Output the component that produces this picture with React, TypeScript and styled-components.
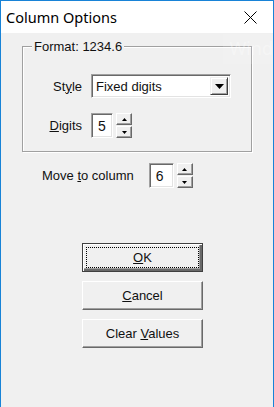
import React from 'react';
import styled, { createGlobalStyle } from 'styled-components';

const GlobalStyle = createGlobalStyle`
	html, body {
		margin: 0;
		padding: 0;
		background: #f0f0f0;
	}
	body {
		width: 274px;
		height: 407px;
		overflow: hidden;
	}
`;

const Window = styled.div`
	position: relative;
	box-sizing: border-box;
	width: 274px;
	height: 407px;
	border: 1px solid #1883d7;
	border-bottom: none;
	background: #f0f0f0;
	display: flex;
	flex-direction: column;
	font-family: 'Liberation Sans', Arial, sans-serif;
	font-size: 13px;
	color: #111;
	overflow: hidden;
`;

const TitleBar = styled.div`
	height: 32px;
	flex-shrink: 0;
	background: #fff;
	display: flex;
	align-items: center;
	justify-content: space-between;
	padding-left: 5px;
`;

const Title = styled.span`
	font-family: 'Noto Sans', sans-serif;
	font-size: 14.5px;
	color: #000;
`;

const CloseButton = styled.div`
	width: 46px;
	height: 32px;
	display: flex;
	align-items: center;
	justify-content: center;
`;

const Watermark = styled.div`
	position: absolute;
	top: 33px;
	right: -4px;
	padding: 2px 4px 4px 6px;
	background: rgba(255, 255, 255, 0.12);
	color: rgba(255, 255, 255, 0.35);
	font-family: 'Noto Sans', sans-serif;
	font-size: 18px;
	z-index: 1;
`;

const Body = styled.div`
	flex: 1;
	display: flex;
	flex-direction: column;
	padding: 6px 0 0 21px;
`;

const GroupBox = styled.fieldset`
	box-sizing: border-box;
	width: 230px;
	margin: 0;
	padding: 20px 0 13px 0;
	border: 1px solid #a0a0a0;
	box-shadow: 1px 1px 0 #fff, inset 1px 1px 0 #fff;
	display: grid;
	grid-template-columns: 59px auto;
	column-gap: 9px;
	row-gap: 15px;
	align-items: center;
`;

const Legend = styled.legend`
	margin-left: 9px;
	padding: 0 2px;
	background: #f0f0f0;
`;

const Label = styled.span`
	justify-self: end;
	white-space: nowrap;
`;

const Key = styled.span`
	text-decoration: underline;
`;

const Combo = styled.div`
	box-sizing: border-box;
	width: 140px;
	height: 24px;
	background: #fff;
	border: 1px solid;
	border-color: #a0a0a0 #fff #fff #a0a0a0;
	box-shadow: inset 1px 1px 0 #696969, inset -1px -1px 0 #e3e3e3;
	display: flex;
	align-items: stretch;
	padding: 2px;
`;

const ComboText = styled.span`
	flex: 1;
	display: flex;
	align-items: center;
	padding-left: 2px;
`;

const DropButton = styled.div`
	box-sizing: border-box;
	width: 18px;
	background: #f0f0f0;
	border: 1px solid;
	border-color: #f0f0f0 #404040 #404040 #f0f0f0;
	box-shadow: inset 1px 1px 0 #fff, inset -1px -1px 0 #a0a0a0;
	display: flex;
	align-items: center;
	justify-content: center;
`;

const SpinRow = styled.div`
	display: flex;
	align-items: center;
	gap: 3px;
`;

const Edit = styled.div<{ $width: number }>`
	box-sizing: border-box;
	width: ${(p) => p.$width}px;
	height: 25px;
	background: #fff;
	border: 1px solid;
	border-color: #a0a0a0 #fff #fff #a0a0a0;
	box-shadow: inset 1px 1px 0 #696969, inset -1px -1px 0 #e3e3e3;
	display: flex;
	align-items: center;
	padding-left: 6px;
	font-size: 14px;
`;

const Spinner = styled.div`
	display: flex;
	flex-direction: column;
	gap: 1px;
`;

const SpinButton = styled.div`
	box-sizing: border-box;
	width: 16px;
	height: 12px;
	background: #f0f0f0;
	border: 1px solid;
	border-color: #fff #696969 #696969 #fff;
	box-shadow: inset -1px -1px 0 #a0a0a0;
	display: flex;
	align-items: center;
	justify-content: center;
`;

const MoveRow = styled.div`
	display: flex;
	align-items: center;
	margin: 11px 0 0 20px;
	gap: 15px;
`;

const Buttons = styled.div`
	display: flex;
	flex-direction: column;
	gap: 9px;
	margin: 55px 0 0 60px;
`;

const Button = styled.div<{ $default?: boolean }>`
	box-sizing: border-box;
	width: 121px;
	height: 29px;
	background: #f0f0f0;
	border: 1px solid;
	border-color: ${(p) => (p.$default ? '#404040' : '#fff #696969 #696969 #fff')};
	box-shadow: ${(p) =>
		p.$default
			? 'inset 1px 1px 0 #fff, inset -2px -2px 0 #696969, inset -3px -3px 0 #a0a0a0'
			: 'inset -1px -1px 0 #a0a0a0'};
	display: flex;
	align-items: center;
	justify-content: center;
	padding: 3px;
`;

const Focus = styled.div`
	box-sizing: border-box;
	width: 100%;
	height: 100%;
	border: 1px dotted #000;
	display: flex;
	align-items: center;
	justify-content: center;
`;

const Arrow = ({ up, size = 3 }: { up?: boolean; size?: number }) => (
	<svg width={size * 2 + 1} height={size + 1} viewBox={`0 0 ${size * 2 + 1} ${size + 1}`}>
		<polygon
			points={up ? `0,${size + 1} ${size * 2 + 1},${size + 1} ${size + 0.5},0` : `0,0 ${size * 2 + 1},0 ${size + 0.5},${size + 1}`}
			fill="#000"
		/>
	</svg>
);

const Spin = ({ value, width }: { value: string; width: number }) => (
	<SpinRow>
		<Edit $width={width}>{value}</Edit>
		<Spinner>
			<SpinButton>
				<Arrow up size={2} />
			</SpinButton>
			<SpinButton>
				<Arrow size={2} />
			</SpinButton>
		</Spinner>
	</SpinRow>
);

const App = () => {
	return (
		<>
			<GlobalStyle />
			<Window>
				<TitleBar>
					<Title>Column Options</Title>
					<CloseButton>
						<svg width="13" height="13" viewBox="0 0 13 13">
							<path d="M0.5 0.5 L12.5 12.5 M12.5 0.5 L0.5 12.5" stroke="#000" strokeWidth="1" />
						</svg>
					</CloseButton>
				</TitleBar>
				<Watermark>Wind</Watermark>
				<Body>
					<GroupBox>
						<Legend>Format: 1234.6</Legend>
						<Label>
							St<Key>y</Key>le
						</Label>
						<Combo>
							<ComboText>Fixed digits</ComboText>
							<DropButton>
								<Arrow size={4} />
							</DropButton>
						</Combo>
						<Label>
							<Key>D</Key>igits
						</Label>
						<Spin value="5" width={22} />
					</GroupBox>
					<MoveRow>
						<span>
							Move <Key>t</Key>o column
						</span>
						<Spin value="6" width={25} />
					</MoveRow>
					<Buttons>
						<Button $default>
							<Focus>
								<span>
									<Key>O</Key>K
								</span>
							</Focus>
						</Button>
						<Button>
							<span>
								<Key>C</Key>ancel
							</span>
						</Button>
						<Button>
							<span>
								Clear <Key>V</Key>alues
							</span>
						</Button>
					</Buttons>
				</Body>
			</Window>
		</>
	);
};

export default App;
